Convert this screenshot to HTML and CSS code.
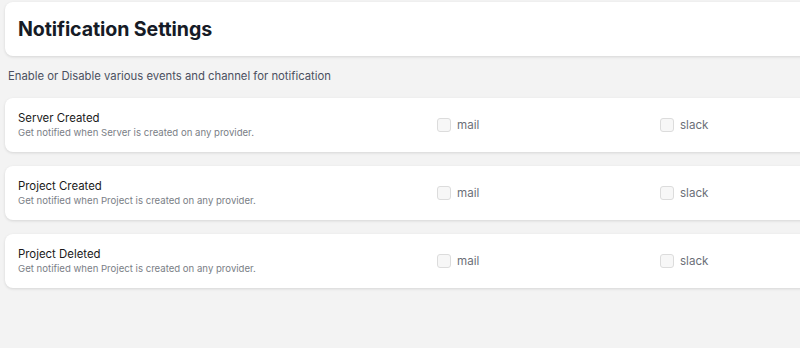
FILE: index.html
```html
<!DOCTYPE html>
<html lang="en">
<head>
    <meta charset="UTF-8">
    <meta name="viewport" content="width=device-width, initial-scale=1.0">
    <title>Notification Settings</title>
    <link rel="stylesheet" href="styles.css">
</head>
<body>
    <div class="page">
        <div class="header-card">
            <h1>Notification Settings</h1>
        </div>

        <p class="intro">Enable or Disable various events and channel for notification</p>

        <div class="event-card">
            <div class="event-info">
                <h3>Server Created</h3>
                <p>Get notified when Server is created on any provider.</p>
            </div>
            <label class="channel"><input type="checkbox"> mail</label>
            <label class="channel"><input type="checkbox"> slack</label>
        </div>

        <div class="event-card">
            <div class="event-info">
                <h3>Project Created</h3>
                <p>Get notified when Project is created on any provider.</p>
            </div>
            <label class="channel"><input type="checkbox"> mail</label>
            <label class="channel"><input type="checkbox"> slack</label>
        </div>

        <div class="event-card">
            <div class="event-info">
                <h3>Project Deleted</h3>
                <p>Get notified when Project is created on any provider.</p>
            </div>
            <label class="channel"><input type="checkbox"> mail</label>
            <label class="channel"><input type="checkbox"> slack</label>
        </div>
    </div>
</body>
</html>
```

FILE: styles.css
```css
* {
    margin: 0;
    padding: 0;
    box-sizing: border-box;
}
body {
    font-family: Inter, 'Noto Sans', sans-serif;
    background: #f3f3f3;
    overflow: hidden;
}
.page {
    width: 1000px;
    padding: 2px 0 0 5px;
}
.header-card {
    background: #fff;
    height: 54px;
    border-radius: 8px;
    box-shadow: 0 1px 3px rgba(0, 0, 0, 0.12);
    display: flex;
    align-items: center;
    padding-left: 13px;
}
h1 {
    font-size: 19.6px;
    font-weight: 700;
    color: #161b26;
    letter-spacing: -0.1px;
}
.intro {
    font-size: 11.3px;
    line-height: 15px;
    color: #4b5060;
    padding: 13px 0 14px 3px;
}
.event-card {
    background: #fff;
    height: 54px;
    border-radius: 8px;
    box-shadow: 0 1px 3px rgba(0, 0, 0, 0.12);
    display: flex;
    align-items: center;
    padding-left: 13px;
    margin-bottom: 14px;
}
.event-info {
    width: 419px;
}
.event-info h3 {
    font-size: 11.4px;
    font-weight: 400;
    color: #1a1a1a;
    line-height: 15px;
}
.event-info p {
    font-size: 9.6px;
    color: #7a7e86;
    line-height: 13px;
}
.channel {
    width: 223px;
    display: flex;
    align-items: center;
    gap: 6px;
    font-size: 11.6px;
    color: #6b6f78;
}
.channel input {
    appearance: none;
    width: 14px;
    height: 14px;
    border: 1px solid #dcdcdc;
    border-radius: 3px;
    background: #f7f7f7;
}
```
